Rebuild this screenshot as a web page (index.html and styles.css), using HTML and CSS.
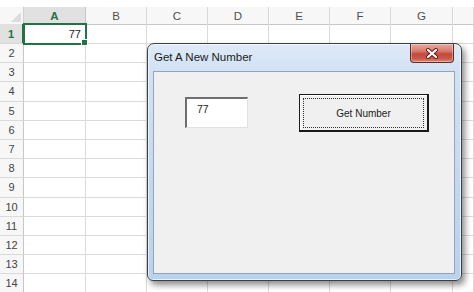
FILE: index.html
```html
<!DOCTYPE html>
<html>
<head>
<meta charset="utf-8">
<link rel="stylesheet" href="styles.css">
</head>
<body>
<div class="sheet">
  <div class="strip"></div>
  <div class="row head">
    <div class="corner"><svg width="24" height="17" viewBox="0 0 24 17"><polygon points="11,15 21,15 21,5" fill="#dcdcdc"/></svg></div>
    <div class="ch on">A</div><div class="ch">B</div><div class="ch">C</div><div class="ch">D</div><div class="ch">E</div><div class="ch">F</div><div class="ch">G</div><div class="ch"></div>
  </div>
  <div class="row first"><div class="rh on">1</div><div class="c sel">77</div><div class="c"></div><div class="c"></div><div class="c"></div><div class="c"></div><div class="c"></div><div class="c"></div><div class="c"></div></div>
  <div class="row"><div class="rh">2</div><div class="c"></div><div class="c"></div><div class="c"></div><div class="c"></div><div class="c"></div><div class="c"></div><div class="c"></div><div class="c"></div></div>
  <div class="row"><div class="rh">3</div><div class="c"></div><div class="c"></div><div class="c"></div><div class="c"></div><div class="c"></div><div class="c"></div><div class="c"></div><div class="c"></div></div>
  <div class="row"><div class="rh">4</div><div class="c"></div><div class="c"></div><div class="c"></div><div class="c"></div><div class="c"></div><div class="c"></div><div class="c"></div><div class="c"></div></div>
  <div class="row"><div class="rh">5</div><div class="c"></div><div class="c"></div><div class="c"></div><div class="c"></div><div class="c"></div><div class="c"></div><div class="c"></div><div class="c"></div></div>
  <div class="row"><div class="rh">6</div><div class="c"></div><div class="c"></div><div class="c"></div><div class="c"></div><div class="c"></div><div class="c"></div><div class="c"></div><div class="c"></div></div>
  <div class="row"><div class="rh">7</div><div class="c"></div><div class="c"></div><div class="c"></div><div class="c"></div><div class="c"></div><div class="c"></div><div class="c"></div><div class="c"></div></div>
  <div class="row"><div class="rh">8</div><div class="c"></div><div class="c"></div><div class="c"></div><div class="c"></div><div class="c"></div><div class="c"></div><div class="c"></div><div class="c"></div></div>
  <div class="row"><div class="rh">9</div><div class="c"></div><div class="c"></div><div class="c"></div><div class="c"></div><div class="c"></div><div class="c"></div><div class="c"></div><div class="c"></div></div>
  <div class="row"><div class="rh">10</div><div class="c"></div><div class="c"></div><div class="c"></div><div class="c"></div><div class="c"></div><div class="c"></div><div class="c"></div><div class="c"></div></div>
  <div class="row"><div class="rh">11</div><div class="c"></div><div class="c"></div><div class="c"></div><div class="c"></div><div class="c"></div><div class="c"></div><div class="c"></div><div class="c"></div></div>
  <div class="row"><div class="rh">12</div><div class="c"></div><div class="c"></div><div class="c"></div><div class="c"></div><div class="c"></div><div class="c"></div><div class="c"></div><div class="c"></div></div>
  <div class="row"><div class="rh">13</div><div class="c"></div><div class="c"></div><div class="c"></div><div class="c"></div><div class="c"></div><div class="c"></div><div class="c"></div><div class="c"></div></div>
  <div class="row"><div class="rh">14</div><div class="c"></div><div class="c"></div><div class="c"></div><div class="c"></div><div class="c"></div><div class="c"></div><div class="c"></div><div class="c"></div></div>

  <div class="dialog">
    <div class="titlebar">
      <span class="title">Get A New Number</span>
      <div class="close"><svg width="14" height="11" viewBox="0 0 14 11"><path d="M3 2 L11 9 M11 2 L3 9" stroke="#5a1a14" stroke-width="4" stroke-linecap="round"/><path d="M3 2 L11 9 M11 2 L3 9" stroke="#ffffff" stroke-width="2.2" stroke-linecap="round"/></svg></div>
    </div>
    <div class="client">
      <div class="textbox">77</div>
      <div class="button"><span class="focus">Get Number</span></div>
    </div>
  </div>
</div>
</body>
</html>
```

FILE: styles.css
```css
* { box-sizing: border-box; }
html, body { margin: 0; padding: 0; background: #ffffff; }
body { width: 474px; height: 292px; overflow: hidden; }

.sheet {
  position: relative;
  font-family: "Liberation Sans", Arial, sans-serif;
  font-size: 11px;
  color: #333;
}
.strip { height: 7px; background: #ffffff; }

.row {
  display: grid;
  grid-template-columns: 24px 62px 61px 61px 61px 61px 61px 62px 1fr;
  height: 19.2px;
}
.row.first { height: 20px; }
.row.head { height: 17px; }

.corner {
  background: #f7f7f7;
  border-right: 1px solid #cfcfcf;
  border-bottom: 1px solid #c6c6c6;
}
.corner svg { display: block; }

.ch {
  background: #f7f7f7;
  border-right: 1px solid #dadada;
  border-bottom: 1px solid #c6c6c6;
  display: flex;
  align-items: center;
  justify-content: center;
  color: #505050;
  font-size: 11.5px;
  padding-top: 1px;
}
.ch.on {
  background: #e1e1e1;
  color: #217346;
  font-weight: bold;
  border-bottom: 2px solid #217346;
  border-right-color: #c6c6c6;
}

.rh {
  background: #f7f7f7;
  border-right: 1px solid #c6c6c6;
  border-bottom: 1px solid #dadada;
  display: flex;
  align-items: center;
  justify-content: center;
  color: #444;
  font-size: 11px;
}
.rh.on {
  background: #e1e1e1;
  color: #217346;
  font-weight: bold;
  border-right: 2px solid #217346;
}

.c {
  border-right: 1px solid #dadada;
  border-bottom: 1px solid #dadada;
}
.c.sel {
  position: relative;
  outline: 2px solid #217346;
  outline-offset: -1px;
  z-index: 1;
  display: flex;
  align-items: center;
  justify-content: flex-end;
  padding-right: 4px;
  padding-top: 1px;
  font-size: 11px;
  color: #222;
}
.c.sel::after {
  content: "";
  position: absolute;
  right: -3px;
  bottom: -3px;
  width: 5px;
  height: 5px;
  background: #217346;
  border: 1px solid #ffffff;
  box-sizing: content-box;
}

/* dialog window */
.dialog {
  position: absolute;
  left: 147px;
  top: 43px;
  width: 315px;
  height: 238px;
  border: 1px solid #3c3f44;
  border-radius: 7px 7px 6px 6px;
  background: linear-gradient(to bottom, #dfeaf7 0, #d2e2f4 26px, #c3d8f0 60%, #b9d2ee 100%);
  box-shadow: inset 0 0 0 1px rgba(255,255,255,0.65), 3px 4px 6px rgba(0,0,0,0.45);
  padding: 0 6px 6px 5px;
  display: flex;
  flex-direction: column;
  z-index: 5;
}
.titlebar {
  height: 27px;
  display: flex;
  justify-content: space-between;
  align-items: flex-start;
}
.title {
  font-family: "Liberation Sans", Arial, sans-serif;
  font-size: 11.5px;
  color: #1b1b1b;
  padding-top: 7px;
  padding-left: 1px;
}
.close {
  width: 44px;
  height: 19px;
  margin-right: 1px;
  border: 1px solid #5d2b26;
  border-top: none;
  border-radius: 0 0 4px 4px;
  background: linear-gradient(to bottom, #e9a89c 0, #d77a6c 40%, #c24a3a 55%, #c9584a 80%, #dd8a7c 100%);
  box-shadow: inset 0 0 0 1px rgba(255,255,255,0.35);
  display: flex;
  align-items: center;
  justify-content: center;
}
.close svg { display: block; }

.client {
  flex: 1;
  background: #f0f0f0;
  border: 1px solid #95a5b9;
  display: flex;
  align-items: flex-start;
  padding: 22px 0 0 31px;
}
.textbox {
  width: 63px;
  height: 31px;
  margin-top: 3px;
  background: #ffffff;
  border-top: 2px solid #6f6f6f;
  border-left: 2px solid #6f6f6f;
  border-right: 1px solid #e2e2e2;
  border-bottom: 1px solid #e2e2e2;
  font-family: "Liberation Sans", Arial, sans-serif;
  font-size: 10.5px;
  color: #222;
  padding: 4px 0 0 10px;
  line-height: 12px;
}
.button {
  width: 130px;
  height: 38px;
  margin-left: 51px;
  background: #f0f0f0;
  border: 1px solid #1a1a1a;
  border-right-width: 2px;
  border-bottom-width: 2px;
  box-shadow: inset 1px 1px 0 #ffffff;
  padding: 3px 3px 2px 3px;
  display: flex;
}
.focus {
  flex: 1;
  border: 1px dotted #333;
  display: flex;
  align-items: center;
  justify-content: center;
  font-family: "Liberation Sans", Arial, sans-serif;
  font-size: 10px;
  color: #222;
}
```
